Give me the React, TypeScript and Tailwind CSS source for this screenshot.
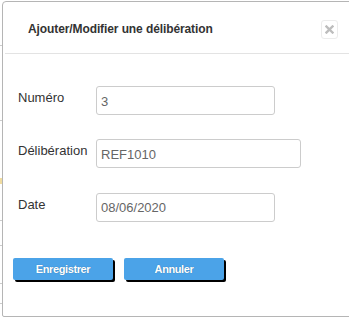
import React from "react";

export default function App() {
  const font = { fontFamily: '"Liberation Sans", Arial, sans-serif' };
  return (
    <div className="relative w-[349px] h-[319px] bg-white overflow-hidden" style={font}>
      {/* background page ticks peeking on the left */}
      <div className="absolute left-0 top-[45px] w-[2px] h-px bg-[#ccc]" />
      <div className="absolute left-0 top-[120px] w-[2px] h-px bg-[#ccc]" />
      <div className="absolute left-0 top-[178px] w-[2px] h-[6px] bg-[#f0dca0]" />
      <div className="absolute left-0 top-[220px] w-[2px] h-px bg-[#ccc]" />
      <div className="absolute left-0 top-[245px] w-[2px] h-px bg-[#ccc]" />
      <div className="absolute left-0 top-[283px] w-[2px] h-px bg-[#ccc]" />
      <div className="absolute left-0 top-[303px] w-[2px] h-px bg-[#ccc]" />

      <div className="ml-[2px] mt-[1px] w-[352px] h-[316px] border border-[#b5b5b5] rounded-tl-[4px] rounded-bl-[2px] bg-white flex flex-col">
        {/* header */}
        <div className="h-[52px] flex items-center justify-between pl-[23px] pr-[13px] border-b border-[#e3e3e3] mx-[2px]">
          <div className="text-[12px] font-bold text-[#333] leading-none mt-[3px] tracking-[-0.1px]">
            Ajouter/Modifier une délibération
          </div>
          <div className="w-[17px] h-[19px] mt-[3px] border border-[#ececec] rounded-[3px] flex items-center justify-center">
            <svg width="9" height="9" viewBox="0 0 9 9">
              <path d="M1.5 1.5 L7.5 7.5 M7.5 1.5 L1.5 7.5" stroke="#bdbdbd" strokeWidth="2.4" strokeLinecap="square" />
            </svg>
          </div>
        </div>

        {/* body */}
        <div className="flex flex-col pl-[15px] pt-[32px]">
          <div className="flex items-start h-[28px]">
            <label className="w-[78px] text-[13px] text-[#333] mt-[2px]">Numéro</label>
            <div className="w-[179px] h-[29px] border border-[#ccc] rounded-[3px] flex items-center pl-[4px] text-[13px] text-[#666] pt-[3px]">3</div>
          </div>
          <div className="flex items-start h-[29px] mt-[25px]">
            <label className="w-[78px] text-[13px] text-[#333] mt-[2px]">Délibération</label>
            <div className="w-[205px] h-[29px] border border-[#ccc] rounded-[3px] flex items-center pl-[4px] text-[13px] text-[#666] pt-[3px]">REF1010</div>
          </div>
          <div className="flex items-start h-[29px] mt-[25px]">
            <label className="w-[78px] text-[13px] text-[#333] mt-[2px]">Date</label>
            <div className="w-[179px] h-[29px] border border-[#ccc] rounded-[3px] flex items-center pl-[4px] text-[13px] text-[#666] pt-[1px]">08/06/2020</div>
          </div>
        </div>

        {/* buttons */}
        <div className="flex gap-[11px] pl-[10px] mt-[36px]">
          <button className="w-[100px] h-[22px] bg-[#4ba3e8] rounded-[2px] text-white font-bold text-[11px] tracking-[-0.4px] shadow-[2px_2px_0_#000] [text-shadow:0_0_1px_#2a6a9c]">
            Enregistrer
          </button>
          <button className="w-[100px] h-[22px] bg-[#4ba3e8] rounded-[2px] text-white font-bold text-[11px] tracking-[-0.4px] shadow-[2px_2px_0_#000] [text-shadow:0_0_1px_#2a6a9c]">
            Annuler
          </button>
        </div>
      </div>
    </div>
  );
}
